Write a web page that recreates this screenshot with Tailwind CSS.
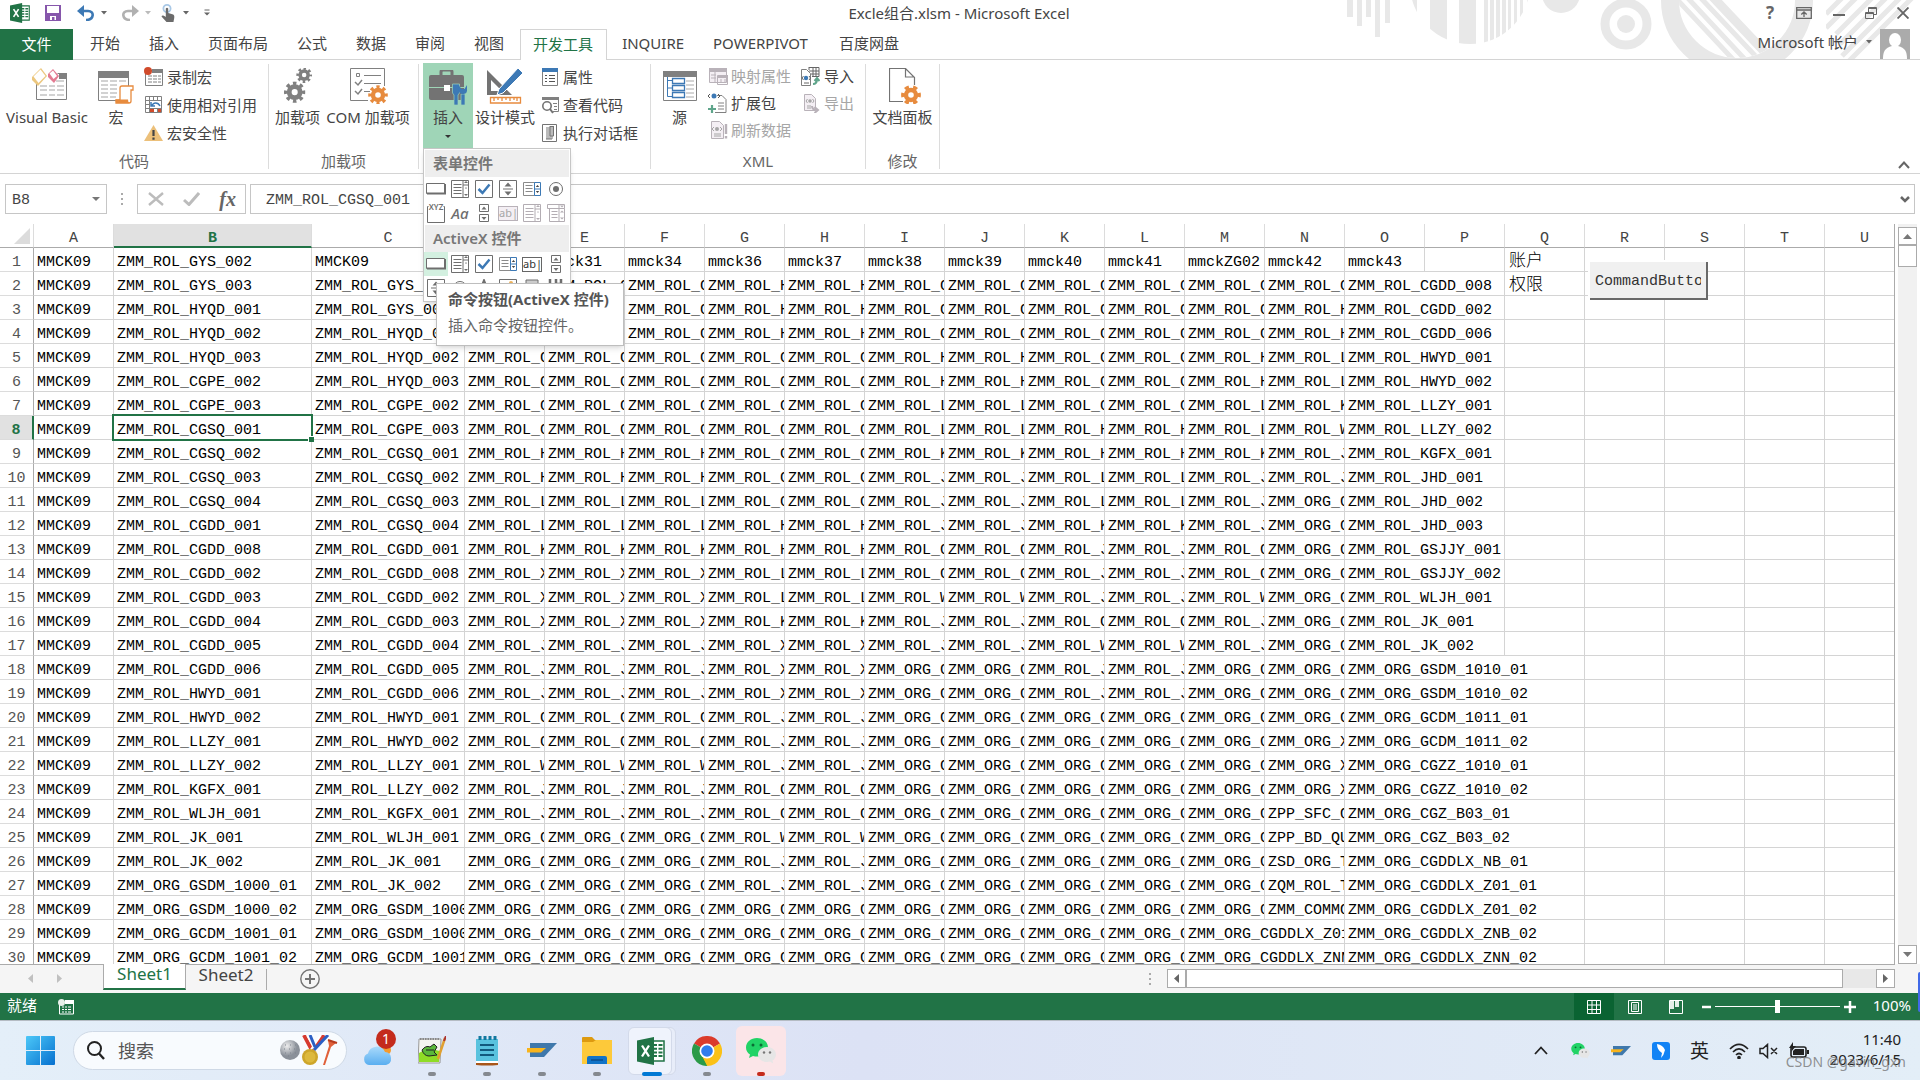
<!DOCTYPE html>
<html lang="zh-CN">
<head>
<meta charset="utf-8">
<title>Excle组合.xlsm - Microsoft Excel</title>
<script src="https://cdn.jsdelivr.net/npm/@tailwindcss/browser@4"></script>
</head>
<body class="flex h-screen flex-col overflow-hidden bg-white font-['Noto_Sans','Noto_Sans_CJK_SC',sans-serif] text-[15px] leading-5 text-[#444]">

<svg class="hidden" aria-hidden="true">
  <symbol id="gear" viewBox="0 0 20 20"><circle cx="10" cy="10" r="5" fill="none" stroke="currentColor" stroke-width="4.4"/><circle cx="10" cy="10" r="8" fill="none" stroke="currentColor" stroke-width="3.6" pathLength="16" stroke-dasharray="1 1" stroke-dashoffset=".5"/></symbol>
  <symbol id="gear6" viewBox="0 0 20 20"><circle cx="10" cy="10" r="5" fill="none" stroke="currentColor" stroke-width="4.4"/><circle cx="10" cy="10" r="8" fill="none" stroke="currentColor" stroke-width="3.8" pathLength="12" stroke-dasharray="1 1" stroke-dashoffset=".5"/></symbol>
  <symbol id="excel" viewBox="0 0 28 28"><path d="M15 4h12v20H15z" fill="#fff" stroke="#217346" stroke-width="1.5"/><path d="M16 7h4v2h-4zm0 3.700h4v2h-4zm0 3.700h4v2h-4zm0 3.700h4v2h-4zM21.500 7h4v2h-4zm0 3.700h4v2h-4zm0 3.700h4v2h-4zm0 3.700h4v2h-4z" fill="#217346"/><path d="M0 3.500 17 0v28L0 24.500z" fill="#217346"/><path d="m5 8.500 7 11M12 8.500l-7 11" stroke="#fff" stroke-width="2.300"/></symbol>
  <symbol id="wechat" viewBox="0 0 30 26"><path d="M11 0C5 0 0 4 0 9.500c0 3 1.500 5.500 4 7L3 20l4-2c7 2 15-1 15-8.500C22 4 17 0 11 0z" fill="#21d366"/><circle cx="7" cy="7" r="1.500" fill="#0b6b34"/><circle cx="15" cy="7" r="1.500" fill="#0b6b34"/><path d="M21 9c-5 0-9 3.200-9 7.500S16 24 21 24c1 0 2-.1 3-.4l3.200 1.800-.7-2.800c2-1.400 3.500-3.500 3.500-6.100C30 12.200 26 9 21 9z" fill="#e6e6e6"/><circle cx="18" cy="14.500" r="1.200" fill="#777"/><circle cx="24" cy="14.500" r="1.200" fill="#777"/></symbol>
  <symbol id="sap" viewBox="0 0 30 15"><path d="M3 0h27L17 14H3z" fill="#3f78ab"/><path d="M0 5h19l-5 4.500H0z" fill="#f8b41c"/></symbol>
  <symbol id="listbox" viewBox="0 0 18 18"><path d="M.5.5h17v17H.5zM12 .5v17M12 5h5.500" fill="none" stroke="currentColor"/><path d="M2.500 4.500h8M2.500 7.500h8M2.500 10.500h8M2.500 13.500h8" stroke="currentColor"/><path d="m13 3 2-2 2 2zm0 11 2 2 2-2zM14 8.500l1-1.500 1 1.500z" fill="currentColor"/></symbol>
  <symbol id="check" viewBox="0 0 18 18"><path d="M.5.5h17v17H.5z" fill="#fff" stroke="#6e6e6e"/><path d="m3.500 9 4 4 7-8.500" fill="none" stroke="#3d79b5" stroke-width="2.500"/></symbol>
  <symbol id="spin" viewBox="0 0 18 18"><path d="M.5.500h17v17H.500zM4 9h10" fill="none" stroke="#6e6e6e"/><path d="m5.500 6.500 3.500-4 3.500 4zM5.500 11.500l3.500 4 3.500-4z" fill="#6e6e6e"/></symbol>
  <symbol id="combo" viewBox="0 0 18 14"><path d="M.5.5h11v13H.5z" fill="none" stroke="#8a8a8a"/><path d="M2.500 3.500h7M2.500 6.500h7M2.500 9.500h7" stroke="#8a8a8a"/><path d="M11.500.5h6v13h-6zM11.500 7h6" fill="none" stroke="#3d79b5"/><path d="m12.800 5 1.700-2 1.700 2zm0 4 1.700 2 1.700-2z" fill="#444"/></symbol>
  <symbol id="scroll" viewBox="0 0 10 18"><path d="M.5.5h9v7h-9zM.5 10.500h9v7h-9z" fill="none" stroke="#6e6e6e"/><path d="m2.500 5.500 2.500-3 2.500 3zM2.500 13l2.500 3 2.500-3z" fill="#6e6e6e"/></symbol>
  <symbol id="rect" viewBox="0 0 20 12"><path d="M.5.500h18v10H.500z" fill="#fff" stroke="#6e6e6e"/><path d="M1 10.500h18V1" fill="none" stroke="#6e6e6e" stroke-width="2"/></symbol>
</svg>

<!-- title bar and ribbon tabs -->
<header class="relative shrink-0">
  <svg class="absolute top-0 right-0 h-[59px] w-[600px]" viewBox="1320 0 600 59" aria-hidden="true">
    <defs>
      <clipPath id="disc"><circle cx="1470" cy="-16" r="60"/></clipPath>
      <clipPath id="lens"><circle cx="1737" cy="0" r="58"/></clipPath>
      <clipPath id="tri"><path d="M1826 0h94v59h-94z"/></clipPath>
    </defs>
    <g fill="#e8e8e8">
      <path d="M1347 0h6v17h-6zM1357 0h5v26h-5zM1366 0h5v17h-5zM1375 0h5v37h-5zM1385 0h5v23h-5z"/>
      <path clip-path="url(#disc)" d="M1407 0h10v50h-10zM1430 0h17v50h-17zM1459 0h17v50h-17zM1484 0h4v50h-4zM1490 0h4v50h-4zM1496 0h4v50h-4zM1502 0h4v50h-4zM1508 0h3v50h-3zM1514 0h3v50h-3zM1520 0h3v50h-3zM1527 0h2v50h-2z"/>
      <circle cx="1561" cy="-6" r="19"/><circle cx="1626" cy="24" r="9"/>
    </g>
    <circle cx="1626" cy="24" r="21" fill="none" stroke="#e8e8e8" stroke-width="9"/>
    <circle cx="1737" cy="0" r="67" fill="none" stroke="#e8e8e8" stroke-width="18"/>
    <g clip-path="url(#lens)" stroke="#e8e8e8"><path d="m1672-6 70 75M1684-6l70 75M1697-6l66 70" stroke-width="5"/><path d="m1710-6 66 70" stroke-width="9"/></g>
    <g clip-path="url(#tri)" stroke="#e8e8e8" stroke-width="5"><path d="m1846-6-20 20M1860-6l-34 34M1876-6l-40 40M1890-6l-50 50M1904-6l-62 62M1920-10l-72 72"/></g>
  </svg>

  <div class="relative flex h-[29px] items-center">
    <div class="flex w-[212px] items-center pb-1 pl-[10px]">
      <svg class="size-5" aria-label="Excel"><use href="#excel"/></svg>
      <button class="ml-[15px]" aria-label="保存"><svg class="size-4" viewBox="0 0 16 16"><path d="M0 0h16v16H0z" fill="#8656ab"/><path d="M2 1h12v7H2zM5 11h6v4H9.500v-3H7v3H5z" fill="#fff"/></svg></button>
      <button class="ml-4 flex items-center gap-[6px]" aria-label="撤消"><svg class="h-4 w-[18px]" viewBox="0 0 18 16"><path d="M2 6h9c7 0 6 9-2 9" fill="none" stroke="#3d79b5" stroke-width="2.600"/><path d="M0 6 7 0v12z" fill="#3d79b5"/></svg><svg class="h-1 w-[6px]" viewBox="0 0 6 4"><path d="M0 0h6L3 3.500z" fill="#666"/></svg></button>
      <button class="ml-[14px] flex items-center gap-[6px]" aria-label="恢复"><svg class="h-4 w-[18px]" viewBox="0 0 18 16"><path d="M16 6H7c-7 0-6 9 2 9" fill="none" stroke="#b1b1b1" stroke-width="2.600"/><path d="m18 6-7-6v12z" fill="#b1b1b1"/></svg><svg class="h-1 w-[6px]" viewBox="0 0 6 4"><path d="M0 0h6L3 3.500z" fill="#bbb"/></svg></button>
      <button class="ml-[10px] flex items-center gap-2" aria-label="触摸模式"><svg class="h-[18px] w-[14px]" viewBox="0 0 14 18"><circle cx="6" cy="4.500" r="3.600" fill="none" stroke="#a9c8e6" stroke-width="1.800"/><path d="M4.800 4.500q1.200-1.500 2.400 0V9l5 1.500c2 1 .8 4.500.3 7.500H5.500L.500 12.500c.5-1.500 2-1.300 4.300.5z" fill="#6b6b6b"/></svg><svg class="h-1 w-[6px]" viewBox="0 0 6 4"><path d="M0 0h6L3 3.500z" fill="#666"/></svg></button>
      <button class="ml-[15px]" aria-label="自定义快速访问工具栏"><svg class="h-[7px] w-[6px]" viewBox="0 0 6 7"><path d="M.5 1h5" stroke="#666"/><path d="M0 3.500h6L3 6.500z" fill="#666"/></svg></button>
    </div>
    <h1 class="flex-1 pr-[58px] pb-1 text-center">Excle组合.xlsm - Microsoft Excel</h1>
    <div class="flex w-[156px] items-center justify-between pr-[11px] pb-[3px] text-[#666]">
      <button class="w-3 text-[17px] font-bold" aria-label="帮助">?</button>
      <button aria-label="功能区显示选项"><svg class="h-3 w-4" viewBox="0 0 16 12" fill="none" stroke="currentColor" stroke-width="1.300"><path d="M.7.700h14.600v10.600H.700zM.7 3h14.600M8 10V5M5.300 7.500 8 5l2.700 2.500"/></svg></button>
      <button aria-label="最小化"><svg class="size-3" viewBox="0 0 12 12"><path d="M0 8h12" stroke="currentColor" stroke-width="2"/></svg></button>
      <button aria-label="还原"><svg class="size-3" viewBox="0 0 12 12" fill="none" stroke="currentColor"><path d="M.5 5.500h8v6h-8zM.5 6.500h8M3.500 5V.500h8v7H9M3.500 1.500h8"/></svg></button>
      <button aria-label="关闭"><svg class="size-3" viewBox="0 0 12 12" stroke="currentColor" stroke-width="1.900"><path d="m.5.500 11 11M11.500.500l-11 11"/></svg></button>
    </div>
  </div>

  <nav class="relative flex h-[31px] items-end gap-px border-b border-[#d4d4d4] leading-7">
    <button class="mr-[2px] -mb-px h-[31px] w-[73px] bg-[#217346] pb-[2px] text-white">文件</button>
    <button class="px-[14px] pb-[2px]">开始</button>
    <button class="px-[14px] pb-[2px]">插入</button>
    <button class="px-[14px] pb-[2px]">页面布局</button>
    <button class="px-[14px] pb-[2px]">公式</button>
    <button class="px-[14px] pb-[2px]">数据</button>
    <button class="px-[14px] pb-[2px]">审阅</button>
    <button class="px-[14px] pb-[2px]">视图</button>
    <button class="-mb-px ml-px h-[31px] border border-b-0 border-[#d4d4d4] bg-white pr-[13px] pb-[2px] pl-3 text-[#217346]">开发工具</button>
    <button class="px-[14px] pb-[2px]">INQUIRE</button>
    <button class="px-[14px] pb-[2px]">POWERPIVOT</button>
    <button class="pr-[14px] pb-[2px] pl-4">百度网盘</button>
    <div class="ml-auto flex items-center pr-[10px]">
      <button class="flex items-center gap-2 pb-1 leading-[26px]">Microsoft 帐户 <svg class="h-1 w-[6px]" viewBox="0 0 6 4"><path d="M0 0h6L3 3.500z" fill="#666"/></svg></button>
      <svg class="ml-2 h-[30px] w-[30px]" viewBox="0 0 30 30" aria-label="头像"><path d="M0 0h30v30H0z" fill="#ababab"/><ellipse cx="15" cy="11" rx="6" ry="7" fill="#fff"/><path d="M3 30c0-8 2-11 9-13h6c7 2 9 5 9 13z" fill="#fff"/></svg>
    </div>
  </nav>
</header>

<!-- ribbon -->
<section class="relative flex h-[114px] shrink-0 border-b border-[#d4d4d4] pt-1 pb-1">
  <div class="flex w-[269px] flex-col border-r border-[#dcdcdc]">
    <div class="flex flex-1">
      <button class="flex w-[94px] flex-col items-center whitespace-nowrap"><svg class="mt-1 h-9 w-10" viewBox="0 0 40 36"><path d="M9.500 12.500V31.500h30V5.500h-9" fill="none" stroke="#808080"/><path d="M32 5h8v6h-8z" fill="#808080"/><path d="M13 18h7m2 0h6m2 0h7m-24 4h7m2 0h6m2 0h7m-24 5h7m2 0h6m2 0h7m-8-14h8" stroke="#a5a5a5"/><path d="m5 9 9-9 6 8-9 10-6-6z" fill="#ecc77e"/><path d="m6.500 8.500 7-7 5 6.500-7 7z" fill="#fff"/><path d="m21 6 5-5 6 7-5 7-6-6z" fill="#e37b92"/><path d="m22.500 5.500 3.500-3 4 5.500-3.500 3z" fill="#fff"/></svg><span class="mt-[3px]">Visual Basic</span></button>
      <button class="flex w-[44px] flex-col items-center"><svg class="mt-1 h-9 w-9" viewBox="0 0 36 36"><path d="M.5 3.500h30v29H.500z" fill="#fff" stroke="#808080"/><path d="M0 3h31v7H0z" fill="#808080"/><path d="M3 13h7m2 0h7m2 0h7M3 17h7m2 0h7M3 21h7m2 0h7M3 25h7m2 0h7M3 29h7m2 0h6" stroke="#a5a5a5"/><path d="M22 32V20q0-2 2-2h11v4h-2v11q0 2-2 2H18v-3z" fill="#fff" stroke="#e78b3e" stroke-width="1.300"/><path d="M17.500 31.500H30q0 3 1.500 3.500H19q-1.500 0-1.500-3.500z" fill="#e78b3e"/></svg><span class="mt-[3px] whitespace-nowrap">宏</span></button>
      <div class="flex flex-col gap-2 pt-[3px] pl-[6px]">
        <button class="flex items-center gap-1"><svg class="h-5 w-[19px]" viewBox="0 0 19 20"><path d="M1.500 3.500h17v15h-17z" fill="#fff" stroke="#808080"/><path d="M8 2h11v4H8z" fill="#808080"/><path d="M4 9h4m1 0h4m1 0h3M4 12h4m1 0h4m1 0h3M4 15h4m1 0h4m1 0h3" stroke="#808080"/><circle cx="4" cy="4" r="4" fill="#d14b2b"/></svg>录制宏</button>
        <button class="flex items-center gap-1"><svg class="h-5 w-[19px]" viewBox="0 0 19 20"><path d="M1.500 1.500h16v16h-16zM5.500 1.500v16M9.500 1.500v16M13.500 1.500v16M1.500 5.500h16M1.500 9.500h16M1.500 13.500h16" fill="none" stroke="#808080"/><path d="M6 6h11v7H6z" fill="#fff"/><path d="M6 14h4v3H6zm8 0h3v3h-3z" fill="#d14b2b"/><path d="M8 11c1-4 6-4 8 0M7 7v4h4" fill="none" stroke="#3d79b5" stroke-width="1.500"/></svg>使用相对引用</button>
        <button class="flex items-center gap-1"><svg class="h-5 w-[19px]" viewBox="0 0 19 20"><path d="M9.500 2 19 18H0z" fill="#ecc07a"/><path d="M9.500 7v6m0 1.500v2.300" stroke="#444" stroke-width="2.200"/></svg>宏安全性</button>
      </div>
    </div>
    <div class="text-center leading-4 text-[#666]">代码</div>
  </div>

  <div class="flex w-[150px] flex-col border-r border-[#dcdcdc]">
    <div class="flex flex-1 gap-[2px] pl-1">
      <button class="flex w-[49px] flex-col items-center whitespace-nowrap text-[#808080]"><svg class="mt-1 h-9 w-[30px]" viewBox="0 0 30 38"><use href="#gear" x="13" y="-1" width="17" height="17"/><use href="#gear" x="0" y="14" width="23" height="23"/></svg><span class="mt-[3px] text-[#444]">加载项</span></button>
      <button class="flex w-[88px] flex-col items-center whitespace-nowrap text-[#e78b3e]"><svg class="mt-1 ml-[2px] h-9 w-[38px]" viewBox="0 0 38 36"><path d="M18 32.500H.500v-32h34V18" fill="none" stroke="#808080"/><path d="M6.500 5.500h3v3h-3zM14 7.500h17M14 15.500h17M14 23.500h6" fill="none" stroke="#808080"/><path d="m5 14 3 3 4-5m-7 11 3 3 4-5" fill="none" stroke="#808080" stroke-width="1.500"/><use href="#gear" x="18" y="17" width="20" height="20"/></svg><span class="mt-[3px] text-[#444]">COM 加载项</span></button>
    </div>
    <div class="text-center leading-4 text-[#666]">加载项</div>
  </div>

  <div class="flex w-[232px] flex-col border-r border-[#dcdcdc]">
    <div class="flex flex-1 pl-1">
      <button class="-mt-px flex h-[85px] w-[50px] flex-col items-center bg-[#9fd5b7]"><svg class="mt-[7px] h-9 w-[38px]" viewBox="0 0 38 36"><path d="M12 5V2q0-2 2-2h7q2 0 2 2v3" fill="none" stroke="#737373" stroke-width="3"/><path d="M2 5h31q2 0 2 2v10H0V7q0-2 2-2zM0 18h35v10q0 2-2 2H2q-2 0-2-2z" fill="#737373"/><path d="M15 15h6v6h-6z" fill="#fff"/><path d="M23.500 14h7v9l-1.500 2v10h-4V25l-1.500-2zM32 24h4v11h-4z" fill="#3d79b5" stroke="#9fd5b7" stroke-width=".7"/><path d="M29.500 15v4q0 5 4.500 5t4-5v-4l-2.500 4h-3z" fill="#3d79b5"/></svg><span class="-mt-px pt-[2px]">插入</span><svg class="mt-2 h-[3px] w-[6px]" viewBox="0 0 6 3"><path d="M0 0h6L3 3z" fill="#333"/></svg></button>
      <button class="flex w-[64px] flex-col items-center whitespace-nowrap"><svg class="mt-1 h-9 w-9" viewBox="0 0 36 36"><path d="M0 2v25h25zM4 12l11 11H4z" fill="#737373" fill-rule="evenodd"/><path d="m31 0 5 5-20 20-6 2 2-6z" fill="#3d79b5" stroke="#fff"/><path d="M3.500 29.500h30v5.500h-30zM7 30v3m4-3v2m4-2v3m4-3v2m4-2v3m4-3v2m3-2v3" fill="#fff" stroke="#e78b3e" stroke-width="1.300"/></svg><span class="mt-[3px]">设计模式</span></button>
      <div class="flex flex-col gap-2 pt-[3px] pl-1">
        <button class="flex items-center gap-1"><svg class="h-5 w-[18px]" viewBox="0 0 18 20"><path d="M1.500 1.500h15v17h-15z" fill="#fff" stroke="#808080"/><path d="M1 1h16v4H1z" fill="#3d79b5"/><path d="M4 8.500h2m2 0h6m-10 3h2m2 0h6m-10 3h2m2 0h6" stroke="#555"/></svg>属性</button>
        <button class="flex items-center gap-1"><svg class="h-5 w-[18px]" viewBox="0 0 18 20"><path d="M3 2.500h14.500v14H12" fill="none" stroke="#808080"/><path d="M1 2h17v3H1z" fill="#808080"/><path d="M12 8.500h4m-3 3h3m-3 3h3" stroke="#808080"/><circle cx="6" cy="11" r="4.200" fill="#fff" stroke="#737373" stroke-width="1.600"/><path d="m9 14 3 4" stroke="#737373" stroke-width="2"/></svg>查看代码</button>
        <button class="flex items-center gap-1"><svg class="h-5 w-[18px]" viewBox="0 0 18 20"><path d="M1.500 1.500h14v17h-14z" fill="#fff" stroke="#737373"/><path d="M5 4h7v12H5z" fill="#bbb"/><path d="M9 3.500h4M9 3v10h3.500V4M5 16h6" fill="none" stroke="#737373"/></svg>执行对话框</button>
      </div>
    </div>
  </div>

  <div class="flex w-[215px] flex-col border-r border-[#dcdcdc]">
    <div class="flex flex-1">
      <button class="flex w-[57px] flex-col items-center"><svg class="mt-1 h-9 w-[34px]" viewBox="0 0 34 36"><path d="M.5 3.500h33v29H.500z" fill="#fff" stroke="#808080"/><path d="M0 3h34v6H0z" fill="#808080"/><path d="M23 17h8m-8 8h8m-8-4h8M23 13h8m-8 16h8" stroke="#aaa"/><path d="M4.500 9v19.500h5M4.500 12.500h5m-5 7.500h5" fill="none" stroke="#3d79b5"/><path d="M9.500 10.500h12v5h-12zm0 7h12v5h-12zm0 7h12v5h-12z" fill="#fff" stroke="#3d79b5" stroke-width="1.300"/></svg><span class="mt-[3px]">源</span></button>
      <div class="flex flex-col gap-[7px] pt-[2px]">
        <button class="flex items-center gap-[3px] text-[#a6a6a6]" disabled><svg class="h-5 w-5" viewBox="0 0 20 20"><path d="M1.500 2.500h17v14h-17z" fill="#f4eff4" stroke="#b9b2b9"/><path d="M1 2h18v4H1zM10 9h10v3H10z" fill="#b9b2b9"/><path d="M9.500 9.500h10v9h-10zM3 9h5m-5 3h5m4 2h2m2 0h2m-6 2h2m2 0h2M7 6v10" fill="none" stroke="#b9b2b9"/></svg>映射属性</button>
        <button class="flex items-center gap-[3px]"><svg class="h-5 w-5" viewBox="0 0 20 20"><path d="M9 2.500h5l4 4v13H7" fill="none" stroke="#808080"/><path d="M10 10h6m-6 3h6m-6 3h6" stroke="#808080"/><circle cx="6" cy="3" r="2.500" fill="#3d79b5"/><path d="m2 1-2 2 2 2m8-4 2 2-2 2" fill="none" stroke="#555"/><path d="M4 12v8M0 16h8" stroke="#5fa58b" stroke-width="2.200"/></svg>扩展包</button>
        <button class="flex items-center gap-[3px] text-[#a6a6a6]" disabled><svg class="h-5 w-5" viewBox="0 0 20 20"><path d="M3.500 1.500h8l4 4v13h-12z" fill="#f4eff4" stroke="#b9b2b9"/><circle cx="9" cy="9" r="2" fill="#a6a6a6"/><path d="m6 7-2 2 2 2m6-4 2 2-2 2M6 14h7m-7 2h7" fill="none" stroke="#a6a6a6"/><path d="M18 4v10m0 2v2.500" stroke="#b9b2b9" stroke-width="2.400"/></svg>刷新数据</button>
      </div>
      <div class="flex flex-col gap-[7px] pt-[2px] pl-[9px]">
        <button class="flex items-center gap-1"><svg class="h-5 w-5" viewBox="0 0 20 20"><path d="M1.500 3.500h5l4 4v12h-9z" fill="#fff" stroke="#808080"/><path d="M9 1.500h10v9H12M9 1v3m4-3v9m3-9v9M9 5h10M11 8h8" fill="none" stroke="#666"/><circle cx="6" cy="12" r="2.200" fill="#3d79b5"/><path d="M3.500 10 2 12l1.500 2M9 10l1.500 2L9 14M4 17h5" fill="none" stroke="#666"/><path d="M13 18q4 0 4-5m-2.500 2 2.500-3 2.500 3" fill="none" stroke="#5fa58b" stroke-width="2"/></svg>导入</button>
        <button class="flex items-center gap-1 text-[#a6a6a6]" disabled><svg class="h-5 w-5" viewBox="0 0 20 20"><path d="M4.500 1.500h7l4 4v12h-11z" fill="#f4eff4" stroke="#b9b2b9"/><circle cx="10" cy="8" r="1.800" fill="#a6a6a6"/><path d="M7.500 6 6 8l1.500 2m5-4L14 8l-1.500 2M7 13h4m-4 2h4" fill="none" stroke="#a6a6a6"/><path d="M12 13q0 4 5 4m-2.500-3 3.500 3-3.500 3" fill="none" stroke="#b9b2b9" stroke-width="2"/></svg>导出</button>
      </div>
    </div>
    <div class="text-center leading-4 text-[#666]">XML</div>
  </div>

  <div class="flex w-[74px] flex-col border-r border-[#dcdcdc]">
    <button class="flex flex-1 flex-col items-center whitespace-nowrap text-[#e78b3e]"><svg class="mt-1 ml-1 h-9 w-8" viewBox="0 0 32 36"><path d="M14 33.500H.500v-33h16l9 9V17M16.500.500v8.500h9" fill="none" stroke="#737373" stroke-width="1.200"/><use href="#gear6" x="12" y="17" width="20" height="20"/></svg><span class="mt-[3px] text-[#444]">文档面板</span></button>
    <div class="text-center leading-4 text-[#666]">修改</div>
  </div>
  <button class="mt-auto mr-[10px] ml-auto" aria-label="折叠功能区"><svg class="h-2 w-3" viewBox="0 0 12 8"><path d="m1 7 5-5.500L11 7" fill="none" stroke="#666" stroke-width="2"/></svg></button>

  <!-- control gallery opened from the insert button -->
  <div class="absolute top-[88px] left-[423px] z-20 h-[154px] w-[148px] border border-[#c6c6c6] bg-white p-px pl-0 text-[#6e6e6e] shadow-md">
    <h2 class="ml-px h-[27px] bg-[#eee] pl-2 leading-[26px] font-semibold text-[#777]">表单控件</h2>
    <div class="grid w-36 grid-cols-6">
      <button class="flex size-6 items-center justify-center" aria-label="按钮"><svg class="h-3 w-5"><use href="#rect"/></svg></button>
      <button class="flex size-6 items-center justify-center" aria-label="组合框"><svg class="size-[18px]"><use href="#listbox"/></svg></button>
      <button class="flex size-6 items-center justify-center" aria-label="复选框"><svg class="size-[18px]"><use href="#check"/></svg></button>
      <button class="flex size-6 items-center justify-center" aria-label="数值调节钮"><svg class="size-[18px]"><use href="#spin"/></svg></button>
      <button class="flex size-6 items-center justify-center" aria-label="列表框"><svg class="h-[14px] w-[18px]"><use href="#combo"/></svg></button>
      <button class="flex size-6 items-center justify-center" aria-label="选项按钮"><svg class="size-4" viewBox="0 0 16 16"><circle cx="8" cy="8" r="6.500" fill="none" stroke="currentColor"/><circle cx="8" cy="8" r="3" fill="currentColor"/></svg></button>
      <button class="flex size-6 flex-col items-center justify-center" aria-label="分组框"><svg class="size-5" viewBox="0 0 20 20"><path d="M2.500 3.500h-1v16h17v-16h-1" fill="none" stroke="currentColor"/><text x="10" y="7" text-anchor="middle" font-size="8" font-weight="600" fill="currentColor">XYZ</text></svg></button>
      <button class="flex size-6 items-center justify-center text-[15px] font-medium italic" aria-label="标签">Aa</button>
      <button class="flex size-6 items-center justify-center" aria-label="滚动条"><svg class="h-[18px] w-[10px]"><use href="#scroll"/></svg></button>
      <button class="flex size-6 items-center justify-center" disabled aria-label="文本域"><span class="h-[15px] w-5 border border-[#b9b2b9] bg-[#f4eff4] text-center text-[11px] leading-3 text-[#a6a6a6]">ab|</span></button>
      <button class="flex size-6 items-center justify-center text-[#b3adb3]" disabled aria-label="组合列表编辑框"><svg class="size-[18px]"><use href="#listbox"/></svg></button>
      <button class="flex size-6 items-center justify-center text-[#b3adb3]" disabled aria-label="组合下拉编辑框"><svg class="size-[18px]" viewBox="0 0 18 18"><path d="M.5.500h17v4H.500zM2.500 4.500v13h15v-13M12 .5v17" fill="none" stroke="currentColor"/><path d="M4.500 7.500h6M4.500 10.500h6M4.500 13.500h6" stroke="currentColor"/><path d="m13 1.500 2 2 2-2zm0 7 2-2 2 2zm0 5 2 2 2-2z" fill="currentColor"/></svg></button>
    </div>
    <h2 class="ml-px h-[27px] bg-[#eee] pl-2 leading-[26px] font-semibold text-[#777]">ActiveX 控件</h2>
    <div class="grid h-12 w-36 grid-cols-6 overflow-hidden">
      <button class="flex size-6 items-center justify-center bg-[#d3f0e0]" aria-label="命令按钮"><svg class="h-3 w-5"><use href="#rect"/></svg></button>
      <button class="flex size-6 items-center justify-center" aria-label="组合框"><svg class="size-[18px]"><use href="#listbox"/></svg></button>
      <button class="flex size-6 items-center justify-center" aria-label="复选框"><svg class="size-[18px]"><use href="#check"/></svg></button>
      <button class="flex size-6 items-center justify-center" aria-label="列表框"><svg class="h-[14px] w-[18px]"><use href="#combo"/></svg></button>
      <button class="flex size-6 items-center justify-center" aria-label="文本框"><span class="h-[15px] w-5 border border-[#666] text-center text-[11px] leading-3 text-[#333]">ab|</span></button>
      <button class="flex size-6 items-center justify-center" aria-label="滚动条"><svg class="h-[18px] w-[10px]"><use href="#scroll"/></svg></button>
      <button class="flex size-6 items-center justify-center" aria-label="数值调节钮"><svg class="size-[18px]"><use href="#spin"/></svg></button>
      <button class="flex size-6 items-center justify-center" aria-label="选项按钮"><svg class="size-4" viewBox="0 0 16 16"><circle cx="8" cy="8" r="6.500" fill="none" stroke="currentColor"/></svg></button>
      <button class="flex size-6 items-center justify-center" aria-label="标签"><svg class="size-[18px]" viewBox="0 0 18 18"><path d="m3 17 6-15 6 15M5 12h8" fill="none" stroke="currentColor" stroke-width="2.500"/></svg></button>
      <button class="flex size-6 items-center justify-center" aria-label="图像"><svg class="size-[18px]" viewBox="0 0 18 18"><path d="M.5.500h17v17H.500z" fill="none" stroke="currentColor"/><circle cx="12" cy="4" r="2" fill="#ecb25a"/></svg></button>
      <button class="flex size-6 items-center justify-center" aria-label="切换按钮"><svg class="size-[18px]" viewBox="0 0 18 18"><path d="M3 1h12v16H3z" fill="#ccc" stroke="currentColor"/></svg></button>
      <button class="flex size-6 items-center justify-center" aria-label="其他控件"><svg class="size-[18px]" viewBox="0 0 18 18"><path d="M3 0v17M9 0v5h5V0M11 5v12" fill="none" stroke="currentColor" stroke-width="2.500"/></svg></button>
    </div>
  </div>
  <div role="tooltip" class="absolute top-[223px] left-[436px] z-30 h-[63px] w-[188px] border border-[#bebebe] bg-white pt-[5px] pl-[11px] whitespace-nowrap text-[#666] shadow-md">
    <strong class="block font-bold text-[#555]">命令按钮(ActiveX 控件)</strong>
    <p class="pt-[6px]">插入命令按钮控件。</p>
  </div>
</section>

<!-- formula bar -->
<section class="flex h-[50px] shrink-0 items-start gap-1 pt-[10px] pr-[5px] pl-[5px]">
  <div class="flex h-[30px] w-[102px] items-center border border-[#c6c6c6] pr-[6px]">
    <input class="w-full min-w-0 pt-1 pl-[6px] font-['Liberation_Mono',monospace] text-[15px] outline-none" value="B8" aria-label="名称框">
    <button aria-label="名称列表"><svg class="h-1 w-2" viewBox="0 0 8 4"><path d="M0 0h8L4 4z" fill="#777"/></svg></button>
  </div>
  <svg class="mx-[10px] mt-[9px] h-3 w-[2px]" viewBox="0 0 2 12"><path d="M1 0v2m0 3v2m0 3v2" stroke="#aaa" stroke-width="2"/></svg>
  <div class="flex h-[30px] w-[109px] items-center justify-between border border-[#c6c6c6] pr-[9px] pl-[10px]">
    <button aria-label="取消"><svg class="h-[14px] w-4" viewBox="0 0 16 14"><path d="m1 1 14 12M15 1 1 13" stroke="#bcbcbc" stroke-width="2.400"/></svg></button>
    <button aria-label="输入"><svg class="h-[14px] w-[17px]" viewBox="0 0 17 14"><path d="m1 8 5 4.500L16 1" fill="none" stroke="#bcbcbc" stroke-width="3"/></svg></button>
    <button class="font-['Liberation_Serif',serif] text-[20px] font-bold italic text-[#666]" aria-label="插入函数">fx</button>
  </div>
  <div class="flex h-[30px] flex-1 items-center border border-[#c6c6c6] pr-1">
    <input class="flex-1 pt-1 pl-[15px] font-['Liberation_Mono',monospace] text-[15px] outline-none" value="ZMM_ROL_CGSQ_001" aria-label="编辑栏">
    <button aria-label="展开编辑栏"><svg class="h-[7px] w-[10px]" viewBox="0 0 10 7"><path d="m1 1 4 4 4-4" fill="none" stroke="#666" stroke-width="2.500"/></svg></button>
  </div>
</section>

<!-- worksheet -->
<main class="flex min-h-0 flex-1 overflow-hidden">
  <div class="relative min-w-0 flex-1 overflow-hidden border-r border-[#ababab]">
    <table class="w-[1905px] table-fixed border-separate border-spacing-0 font-['Liberation_Mono','Noto_Sans_CJK_SC',monospace] text-[15px] text-black">
      <colgroup id="cols"><col class="w-[34px]"><col class="w-[80px]"><col class="w-[198px]"><col class="w-[153px]"></colgroup>
      <thead><tr id="heads"></tr></thead>
      <tbody id="rows"></tbody>
    </table>
    <div class="absolute top-[36px] left-[1588px] bg-white pt-[2px] pl-[2px]">
      <button class="block h-[38px] w-[118px] overflow-hidden border-r-2 border-b-2 border-[#696969] bg-[#f0f0f0] px-[5px] pt-[3px] font-['Liberation_Mono',monospace] text-[15px] whitespace-nowrap text-[#333]"><span class="block overflow-hidden text-left">CommandButton1</span></button>
    </div>
  </div>
  <div class="mr-[3px] ml-[3px] flex w-[19px] shrink-0 flex-col bg-[#f1f1f1] pt-[3px]">
    <button class="flex h-[18px] items-center justify-center border border-[#ababab] bg-white" aria-label="向上滚动"><svg class="h-[5px] w-[9px]" viewBox="0 0 9 5"><path d="M0 5h9L4.500 0z" fill="#777"/></svg></button>
    <div class="h-[22px] border border-[#ababab] bg-white"></div>
    <button class="mt-auto flex h-[19px] items-center justify-center border border-[#ababab] bg-white" aria-label="向下滚动"><svg class="h-[5px] w-[9px]" viewBox="0 0 9 5"><path d="M0 0h9L4.500 5z" fill="#777"/></svg></button>
  </div>
</main>

<!-- sheet tabs -->
<section class="relative flex h-[29px] shrink-0 bg-[#f5f5f5] pr-[25px]">
  <div class="flex w-[103px] items-start gap-6 border-t border-[#ababab] pt-[9px] pl-7">
    <svg class="h-[9px] w-[5px]" viewBox="0 0 5 9"><path d="M5 0v9L0 4.500z" fill="#c0c0c0"/></svg>
    <svg class="h-[9px] w-[5px]" viewBox="0 0 5 9"><path d="M0 0v9l5-4.500z" fill="#c0c0c0"/></svg>
  </div>
  <button class="h-[26px] w-[83px] border-x border-b-2 border-x-[#ababab] border-b-[#217346] bg-white pb-1 text-[17px] leading-5 text-[#217346]">Sheet1</button>
  <div class="flex flex-1 border-t border-[#ababab]">
    <button class="h-[20px] w-20 text-[17px] leading-5">Sheet2</button>
    <span class="mt-1 h-[21px] w-px bg-[#ababab]"></span>
    <button class="ml-[33px] flex items-start pt-1" aria-label="新工作表"><svg class="size-5" viewBox="0 0 20 20" fill="none" stroke="#737373"><circle cx="10" cy="10" r="9.200" stroke-width="1.400"/><path d="M10 5v10M5 10h10" stroke-width="2"/></svg></button>
    <div class="mt-1 ml-auto flex h-[19px] items-center">
      <svg class="mr-4 h-3 w-[2px]" viewBox="0 0 2 12"><path d="M1 0v2m0 3v2m0 3v2" stroke="#aaa" stroke-width="2"/></svg>
      <button class="flex h-[19px] w-[19px] items-center justify-center border border-[#ababab] bg-white" aria-label="向左滚动"><svg class="h-[9px] w-[5px]" viewBox="0 0 5 9"><path d="M5 0v9L0 4.500z" fill="#666"/></svg></button>
      <div class="h-[19px] w-[657px] border border-[#ababab] bg-white"></div>
      <div class="h-[19px] w-[33px] bg-[#e8e8e8]"></div>
      <button class="flex h-[19px] w-[19px] items-center justify-center border border-[#ababab] bg-white" aria-label="向右滚动"><svg class="h-[9px] w-[5px]" viewBox="0 0 5 9"><path d="M0 0v9l5-4.500z" fill="#666"/></svg></button>
    </div>
  </div>
  <span class="absolute top-2 right-0 z-10 h-10 w-[2px] rounded-l bg-[#4169e8]"></span>
</section>

<!-- status bar -->
<footer class="flex h-[27px] shrink-0 items-center bg-[#217346] pl-[7px] text-white">
  <span class="pb-1">就绪</span>
  <svg class="ml-[21px] h-4 w-4" viewBox="0 0 16 16"><path d="M1.500 4v11h14V2H7" fill="none" stroke="#fff"/><path d="M7 1h9v4H7z" fill="#fff"/><circle cx="3.500" cy="3.500" r="3.500" fill="#e8f0ea"/><path d="M4 8h2m1 0h2m1 0h3M4 10.500h2m1 0h2m1 0h3M4 13h2m1 0h2m1 0h3" stroke="#fff"/></svg>
  <button class="ml-auto flex h-[27px] w-10 items-center justify-center bg-[#0a6332]" aria-label="普通"><svg class="size-[14px]" viewBox="0 0 14 14"><path d="M.5.500h13v13H.500zM5 .5v13M9.500.500v13M.5 5h13M.5 9.500h13" fill="none" stroke="#fff"/></svg></button>
  <button class="flex w-[42px] justify-center" aria-label="页面布局"><svg class="size-[14px]" viewBox="0 0 14 14"><path d="M.5.500h13v13H.500zM3.500 2.500h7v9h-7zM5 5h4M5 7h4M5 9h4" fill="none" stroke="#fff"/></svg></button>
  <button class="flex w-10 justify-center" aria-label="分页预览"><svg class="size-[14px]" viewBox="0 0 14 14"><path d="M.5.500h13v13H.500z" fill="none" stroke="#fff"/><path d="M1 1h4v8H1zm5 0h4v6H6z" fill="#e4efe8"/></svg></button>
  <button class="ml-[6px]" aria-label="缩小"><svg class="h-3 w-[9px]" viewBox="0 0 9 12"><path d="M0 6h9" stroke="#fff" stroke-width="2.500"/></svg></button>
  <input type="range" min="0" max="100" value="50" aria-label="显示比例" class="mx-1 h-[14px] w-[125px] appearance-none bg-transparent [&::-webkit-slider-runnable-track]:h-px [&::-webkit-slider-runnable-track]:bg-white [&::-webkit-slider-thumb]:-mt-[6px] [&::-webkit-slider-thumb]:h-[13px] [&::-webkit-slider-thumb]:w-[5px] [&::-webkit-slider-thumb]:appearance-none [&::-webkit-slider-thumb]:bg-white">
  <button aria-label="放大"><svg class="size-3" viewBox="0 0 12 12"><path d="M0 6h12M6 0v12" stroke="#fff" stroke-width="2.500"/></svg></button>
  <span class="w-[64px] pr-[9px] pb-[3px] text-right">100%</span>
</footer>

<!-- desktop taskbar -->
<footer class="relative flex h-[60px] shrink-0 items-center border-t border-[#b5bcc4] bg-linear-to-r from-[#e4eff9] via-[#dce2f5] via-45% to-[#e3eef7] text-[#222]">
  <button class="ml-[26px]" aria-label="开始"><svg class="size-[29px]" viewBox="0 0 29 29"><defs><linearGradient id="win" x1="0" y1="0" x2="1" y2="1"><stop stop-color="#4cc8f8"/><stop offset="1" stop-color="#0670cf"/></linearGradient></defs><path d="M0 1q0-1 1-1h13v14H0zM15 0h13q1 0 1 1v13H15zM0 15h14v14H1q-1 0-1-1zm15 0h14v13q0 1-1 1H15z" fill="url(#win)"/></svg></button>
  <label class="ml-[18px] flex h-[39px] w-[274px] items-center rounded-full border border-[#cfd9e6] bg-[#f8fbfe] pr-2 pl-[13px]">
    <svg class="h-[19px] w-[18px] shrink-0" viewBox="0 0 18 19"><circle cx="7.500" cy="7.500" r="6.500" fill="none" stroke="#222" stroke-width="2"/><path d="m12 12.500 5 5.500" stroke="#222" stroke-width="2.400"/></svg>
    <input class="w-full min-w-0 bg-transparent pl-[13px] text-[18px] outline-none placeholder:text-[#555]" placeholder="搜索" aria-label="搜索">
    <svg class="h-[31px] w-[58px] shrink-0" viewBox="0 0 58 31"><defs><radialGradient id="ball" cx=".35" cy=".3"><stop stop-color="#eee"/><stop offset="1" stop-color="#8a9099"/></radialGradient></defs><circle cx="10" cy="15" r="10" fill="url(#ball)"/><path d="M5 10h1m4 0h1m4 0h1M4 14h1m4 0h1m4 0h1M5 18h1m4 0h1m4 0h1m-8 3h1" stroke="#7c838c"/><path d="m24 0 9 17M44 0 31 17" stroke="#d63a2f" stroke-width="4"/><path d="m27 0 8 15M41 0 30 16" stroke="#fff" stroke-width="2"/><path d="m30 0 5 12M48 0 34 15" stroke="#2c5fc4" stroke-width="3"/><path d="m48 5 8 3-5 4-6 18-2 0 6-19z" fill="#e0603a"/><path d="m48 5 9 3" stroke="#b53b1d" stroke-width="2"/><circle cx="30" cy="22" r="8" fill="#cda52a"/><circle cx="30" cy="22" r="5.500" fill="#ddb93c"/></svg>
  </label>
  <nav class="ml-[2px] flex h-full items-center">
    <button class="relative flex h-[50px] w-[55px] items-center justify-center" aria-label="天气"><svg class="mt-2 h-[22px] w-[30px]" viewBox="0 0 30 22"><defs><linearGradient id="cl" x2="0" y2="1"><stop stop-color="#a9dafb"/><stop offset="1" stop-color="#5aaef0"/></linearGradient></defs><circle cx="24" cy="6" r="5" fill="#f49a2c"/><path d="M7 21a6 6 0 0 1-1-11.500A9 9 0 0 1 23 8a6.600 6.600 0 0 1 1 13z" fill="url(#cl)"/></svg><span class="absolute top-[3px] left-[27px] size-5 rounded-full bg-[#c42b1c] text-center text-[14px] leading-5 text-white">1</span></button>
    <button class="relative flex h-[50px] w-[55px] items-center justify-center" aria-label="Notepad++"><svg class="h-[30px] w-7" viewBox="0 0 28 30"><path d="M1 3h22l-1 24H0z" fill="#f4f4f0" stroke="#999"/><path d="M2 3h20" stroke="#888" stroke-width="2" stroke-dasharray="1.500 1"/><path d="M1 26V17q9-6 21-2l-1 11z" fill="#8fdc26"/><path d="M4 14q4-5 8-3l4-3 3 3-3 5 3 3-8 1q-5 0-7-6zm4 0h8" fill="#5bb83a" stroke="#222"/><path d="M27 2 20 23" stroke="#e0a030" stroke-width="2.500"/><path d="m28 0-2 5" stroke="#a33" stroke-width="2"/></svg><span class="absolute bottom-0 h-1 w-2 rounded-full bg-[#85898f]"></span></button>
    <button class="relative flex h-[50px] w-[55px] items-center justify-center" aria-label="记事本"><svg class="h-[30px] w-[22px]" viewBox="0 0 22 30"><path d="M0 3h22v24H0z" fill="#59c2de"/><path d="M0 26h22v3q-11 1-22 0z" fill="#a8561a"/><path d="M0 25h22v2H0z" fill="#fff"/><path d="M4 9h14M4 14h14M4 19h14" stroke="#12597c" stroke-width="2"/><path d="M4 0v4m5-4v4m5-4v4m5-4v4" stroke="#1378a0" stroke-width="3"/></svg><span class="absolute bottom-0 h-1 w-2 rounded-full bg-[#85898f]"></span></button>
    <button class="relative flex h-[50px] w-[55px] items-center justify-center" aria-label="SAP Logon"><svg class="h-[15px] w-[30px]"><use href="#sap"/></svg><span class="absolute bottom-0 h-1 w-2 rounded-full bg-[#85898f]"></span></button>
    <button class="relative flex h-[50px] w-[55px] items-center justify-center" aria-label="文件资源管理器"><svg class="h-[27px] w-[30px]" viewBox="0 0 30 27"><path d="M0 1q0-1 1-1h9l3 3h16q1 0 1 1v4H0z" fill="#dd9a10"/><path d="M0 5h11l3-2h16v24H0z" fill="#fdc93a"/><path d="M5 27v-6q0-2 2-2h16q2 0 2 2v6z" fill="#1173c7"/><path d="M9 23h12" stroke="#0a4d8c" stroke-width="1.500"/></svg><span class="absolute bottom-0 h-1 w-2 rounded-full bg-[#85898f]"></span></button>
    <button class="relative flex h-[50px] w-[55px] items-center justify-center" aria-label="Excel"><span class="absolute top-px left-[8px] h-12 w-[44px] rounded-md border border-[#d3daea] bg-[#eef2fb]/60"></span><span class="absolute top-px left-[4px] h-12 w-[44px] rounded-md border border-[#d3daea] bg-[#eff3fc]"></span><svg class="relative mr-px size-7"><use href="#excel"/></svg><span class="absolute bottom-0 left-[18px] h-1 w-5 rounded-full bg-[#0078d4]"></span></button>
    <button class="relative flex h-[50px] w-[55px] items-center justify-center" aria-label="Chrome"><svg class="size-[30px]" viewBox="0 0 30 30"><path d="M15 15 2 7.500A15 15 0 0 1 28 7.500z" fill="#db3b2b"/><path d="m15 15 13-7.500A15 15 0 0 1 15 30z" fill="#fbc117"/><path d="M15 15v15A15 15 0 0 1 2 7.500z" fill="#2a9a48"/><path d="m9 18 6 12 6-11z" fill="#fbc117"/><path d="m9 19 6 11-8-3z" fill="#2a9a48"/><circle cx="15" cy="15" r="7.500" fill="#fff"/><circle cx="15" cy="15" r="5.800" fill="#2f7ded"/></svg><span class="absolute bottom-0 h-1 w-2 rounded-full bg-[#85898f]"></span></button>
    <button class="relative ml-[2px] flex h-[50px] w-[50px] items-center justify-center rounded-md bg-[#fbe5e8]" aria-label="微信"><svg class="h-[26px] w-[30px]"><use href="#wechat"/></svg><span class="absolute bottom-0 h-1 w-2 rounded-full bg-[#c42b1c]"></span></button>
  </nav>
  <div class="ml-auto flex items-center pr-[19px]">
    <button aria-label="显示隐藏的图标"><svg class="h-[9px] w-[14px]" viewBox="0 0 14 9"><path d="m1 8 6-6.500L13 8" fill="none" stroke="#222" stroke-width="1.800"/></svg></button>
    <svg class="ml-[23px] h-4 w-[19px]" aria-label="微信"><use href="#wechat"/></svg>
    <svg class="ml-[21px] h-[10px] w-5" aria-label="SAP"><use href="#sap"/></svg>
    <svg class="ml-[21px] size-[18px]" viewBox="0 0 18 18" aria-label="钉钉"><rect width="18" height="18" rx="3" fill="#1283f5"/><path d="M5 2q6 1 8 6-1 5-4 8l1-5q-5-3-5-9z" fill="#fff"/></svg>
    <button class="ml-5 text-[19px]">英</button>
    <svg class="ml-5 h-4 w-5" viewBox="0 0 20 16" fill="none" stroke="#222" stroke-width="1.700" aria-label="网络"><path d="M1 6q9-9 18 0M4 9q6-6 12 0M7 12q3-3 6 0"/><circle cx="10" cy="14.500" r="1" fill="#222"/></svg>
    <svg class="ml-[10px] h-4 w-[19px]" viewBox="0 0 19 16" fill="none" stroke="#222" stroke-width="1.500" aria-label="静音"><path d="M1 5.500h3L8.500 1.500v13L4 10.500H1zM12 5l6 6m0-6-6 6"/></svg>
    <svg class="ml-[11px] h-[17px] w-5" viewBox="0 0 20 17" aria-label="电池"><rect x="2" y="5" width="15" height="10" rx="2" fill="none" stroke="#222" stroke-width="1.600"/><path d="M6 7h9v6H4v-4zM18 8h2v4h-2zM4 0 0 6h3l-1 4 5-6H4z" fill="#222"/></svg>
    <div class="w-[92px] pb-1 text-right"><div>11:40</div><div>2023/6/15</div></div>
  </div>
  <div class="pointer-events-none absolute right-[14px] bottom-[8px] text-[14px] leading-5 text-[#777]/80">CSDN @gavin_gxn</div>
</footer>

<script>
const letters = 'ABCDEFGHIJKLMNOPQRSTU'.split('');
const roles = 'GYS_002 GYS_003 HYQD_001 HYQD_002 HYQD_003 CGPE_002 CGPE_003 CGSQ_001 CGSQ_002 CGSQ_003 CGSQ_004 CGDD_001 CGDD_008 CGDD_002 CGDD_003 CGDD_004 CGDD_005 CGDD_006 HWYD_001 HWYD_002 LLZY_001 LLZY_002 KGFX_001 WLJH_001 JK_001 JK_002'.split(' ').map(s => 'ZMM_ROL_' + s);
const orgs = 'GSDM_1000_01 GSDM_1000_02 GCDM_1001_01 GCDM_1001_02'.split(' ').map(s => 'ZMM_ORG_' + s);
const colB = roles.concat(orgs);
const colC = ['MMCK09'].concat(colB);
// one letter per role, starting at row 2; remaining rows are organisation entries
const expand = (head, code) => [head, ...code.split('').map(c => 'ZMM_ROL_' + c)];
const fill = a => { while (a.length < 30) a.push('ZMM_ORG_G'); return a; };
const de = 'CCCCCCCHHLLKXXXJJJCCWJJ', gh = 'HHHCCCCCCCHHLLKXXXJJJCCWJJ', ij = 'CCCHHLLKJJJGGWJJ', kl = 'CCCCCCHHLLKJJJCWJJ';
const colM = fill(expand('mmckZG02', ij));
colM[28] = 'ZMM_ORG_CGDDLX_Z01'; colM[29] = 'ZMM_ORG_CGDDLX_ZNN';
const colN = fill(expand('mmck42', 'CHHLLKWJJ'));
[20, 21, 22].forEach(i => colN[i] = 'ZMM_ORG_X');
['ZPP_SFC_Q', 'ZPP_BD_QU', 'ZSD_ORG_T', 'ZQM_ROL_T', 'ZMM_COMMO'].forEach((t, i) => colN[23 + i] = t);
const colO = ['mmck43'].concat(
  'CGDD_008 CGDD_002 CGDD_006 HWYD_001 HWYD_002 LLZY_001 LLZY_002 KGFX_001 JHD_001 JHD_002 JHD_003 GSJJY_001 GSJJY_002 WLJH_001 JK_001 JK_002'.split(' ').map(s => 'ZMM_ROL_' + s),
  'GSDM_1010_01 GSDM_1010_02 GCDM_1011_01 GCDM_1011_02 CGZZ_1010_01 CGZZ_1010_02 CGZ_B03_01 CGZ_B03_02 CGDDLX_NB_01 CGDDLX_Z01_01 CGDDLX_Z01_02 CGDDLX_ZNB_02 CGDDLX_ZNN_02'.split(' ').map(s => 'ZMM_ORG_' + s));
const columns = [Array(30).fill('MMCK09'), colB, colC.map(t => t.slice(0, 17)), fill(expand('mmck30', de)), fill(expand('mmck31', de)), fill(expand('mmck34', de)),
  fill(expand('mmck36', gh)), fill(expand('mmck37', gh)), fill(expand('mmck38', ij)), fill(expand('mmck39', ij)),
  fill(expand('mmck40', kl)), fill(expand('mmck41', kl)), colM, colN, colO, [], ['账户', '权限'], [], [], [], []];

document.getElementById('cols').insertAdjacentHTML('beforeend', '<col class="w-[80px]">'.repeat(18));
document.getElementById('heads').innerHTML =
  '<th class="h-6 border-r border-b border-r-[#dcdcdc] border-b-[#ababab] p-0"><svg class="ml-[14px] h-4 w-4" viewBox="0 0 16 16"><path d="M16 0v16H0z" fill="#dcdcdc"/></svg></th>' +
  letters.map(l => l === 'B'
    ? '<th class="h-6 border-r border-b-2 border-r-[#dcdcdc] border-b-[#217346] bg-[#e1e1e1] p-0 font-bold text-[#217346]"><div class="h-[22px] leading-[29px]">B</div></th>'
    : `<th class="h-6 border-r border-b border-r-[#dcdcdc] border-b-[#ababab] p-0 font-normal text-[#444]"><div class="h-[23px] leading-[29px]">${l}</div></th>`).join('');
let html = '';
for (let r = 0; r < 30; r++) {
  html += '<tr>' + (r === 7
    ? '<th class="h-6 border-r-2 border-b border-r-[#217346] border-b-[#dcdcdc] bg-[#e1e1e1] p-0 font-bold text-[#217346]"><div class="h-[23px] leading-[29px]">8</div></th>'
    : `<th class="h-6 border-r border-b border-r-[#ababab] border-b-[#dcdcdc] p-0 font-normal text-[#555]"><div class="h-[23px] leading-[29px]">${r + 1}</div></th>`);
  for (let c = 0; c < 21; c++) {
    let span = 1;
    if (c === 12 && r >= 28) span = 2;
    if (c === 14 && r >= 1) span = r < 17 ? 2 : 3;
    const mark = c === 1 && r === 7
      ? '<i class="absolute -top-[2px] -right-[2px] -bottom-[2px] -left-[2px] border-2 border-[#217346]"></i><i class="absolute -right-[3px] -bottom-[3px] size-[6px] border-t border-l border-white bg-[#217346]"></i>' : '';
    const pos = mark ? 'relative h-6 border-r border-b border-[#d4d4d4] p-0' : 'h-6 border-r border-b border-[#d4d4d4] p-0';
    const txt = c === 16 ? 'h-[23px] pl-1 text-[17px] leading-7 font-light whitespace-nowrap' : 'h-[23px] overflow-hidden pl-[3px] leading-[29px] whitespace-nowrap';
    html += `<td class="${pos}" colspan="${span}"><div class="${txt}">${columns[c][r] || ''}</div>${mark}</td>`;
    c += span - 1;
  }
  html += '</tr>';
}
document.getElementById('rows').innerHTML = html;
</script>
</body>
</html>
